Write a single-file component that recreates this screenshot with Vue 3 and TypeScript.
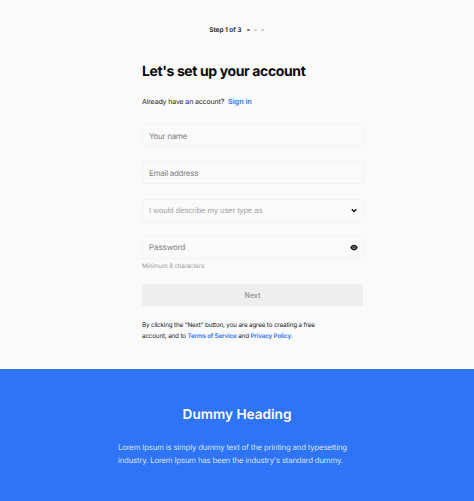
<script setup lang="ts">
const dots: number[] = [0, 1, 2]
</script>

<template>
  <div class="page">
    <section class="top">
      <div class="steps">
        <span class="step-label">Step 1 of 3</span>
        <span class="dots">
          <i v-for="d in dots" :key="d" class="dot" :class="{ on: d === 0 }"></i>
        </span>
      </div>
      <form class="form" @submit.prevent>
        <h1>Let's set up your account</h1>
        <p class="have">Already have an account? <a>Sign in</a></p>
        <div class="field"><span>Your name</span></div>
        <div class="field"><span>Email address</span></div>
        <div class="field select">
          <span>I would describe my user type as</span>
          <svg width="6" height="5" viewBox="0 0 8 6"><path d="M1 1.2 4 4.300 7 1.200" fill="none" stroke="#111" stroke-width="1.900"/></svg>
        </div>
        <div class="field pw">
          <span>Password</span>
          <svg width="8" height="7" viewBox="0 0 10 8"><path d="M0.3 4C1.5 1.6 3.2.5 5 .5S8.500 1.600 9.700 4C8.500 6.400 6.800 7.500 5 7.500S1.500 6.400.3 4Z" fill="#111"/><circle cx="5" cy="4" r="2" fill="#bbb"/><circle cx="5" cy="4" r="1.100" fill="#111"/></svg>
        </div>
        <p class="hint">Minimum 8 characters</p>
        <button class="next" type="button">Next</button>
        <p class="terms">By clicking the "Next" button, you are agree to creating a free<br>account, and to <a>Terms of Service</a> and <a>Privacy Policy.</a></p>
      </form>
    </section>
    <section class="bottom">
      <h2>Dummy Heading</h2>
      <p>Lorem Ipsum is simply dummy text of the printing and typesetting<br>industry. Lorem Ipsum has been the industry's standard dummy.</p>
    </section>
  </div>
</template>

<style>
html, body { margin: 0; background: #fafafa; }
</style>

<style scoped>
.page { width: 474px; height: 501px; font-family: Inter, "Liberation Sans", sans-serif; text-rendering: geometricPrecision; display: flex; flex-direction: column; overflow: hidden; }
.top { height: 369px; box-sizing: border-box; background: #fafafa; padding-top: 25px; }
.steps { display: flex; justify-content: center; align-items: center; gap: 6px; height: 10px; padding-right: 1px; }
.step-label { font-size: 6.600px; font-weight: 600; color: #222; line-height: 10px; letter-spacing: -.08px; }
.dots { display: flex; gap: 4.600px; }
.dot { width: 2.400px; height: 2.400px; border-radius: 50%; background: #ccc; }
.dot.on { background: #777; }
.form { width: 222px; margin: 0 0 0 142px; }
h1 { margin: 26px 0 0; font-size: 14px; letter-spacing: -.38px; line-height: 22px; font-weight: 700; color: #0a0a0a; }
.have { margin: 13px 0 0; font-size: 7px; letter-spacing: -.14px; line-height: 12px; color: #222; }
.have a { font-size: 7.300px; letter-spacing: 0; margin-left: 2px; }
a { color: #2f73f5; font-weight: 600; }
.field { box-sizing: border-box; height: 23px; margin-top: 14.300px; border: 1px solid #f3f3f3; border-radius: 3px; padding: 0 6px; display: flex; align-items: center; justify-content: space-between; font-size: 8px; letter-spacing: -.28px; color: #808080; }
.have + .field { margin-top: 16px; }
.select { color: #a0a0a0; padding-right: 6px; font-family: "Liberation Sans", sans-serif; font-size: 7.800px; letter-spacing: 0; }
.pw { padding-right: 5px; letter-spacing: -.1px; }
.hint { margin: 3.500px 0 0; font-size: 6.200px; letter-spacing: -.16px; line-height: 10px; color: #9a9a9a; }
.next { display: block; width: 221px; height: 22px; margin-top: 12px; border: 0; padding: 0; border-radius: 2px; background: #eeeeee; color: #999; font: 600 7px Inter, "Liberation Sans", sans-serif; }
.terms { margin: 14px 0 0; font-size: 6.300px; letter-spacing: -.16px; line-height: 10.500px; color: #222; }
.bottom { flex: 1; background: #2f73f7; color: #fff; padding-top: 36px; text-align: center; }
h2 { margin: 0; font-size: 13.600px; line-height: 20px; font-weight: 600; }
.bottom p { margin: 16px 0 0; font-size: 7.800px; letter-spacing: -.19px; line-height: 13px; color: #d5e3fd; text-align: left; padding-left: 118px; }
</style>
